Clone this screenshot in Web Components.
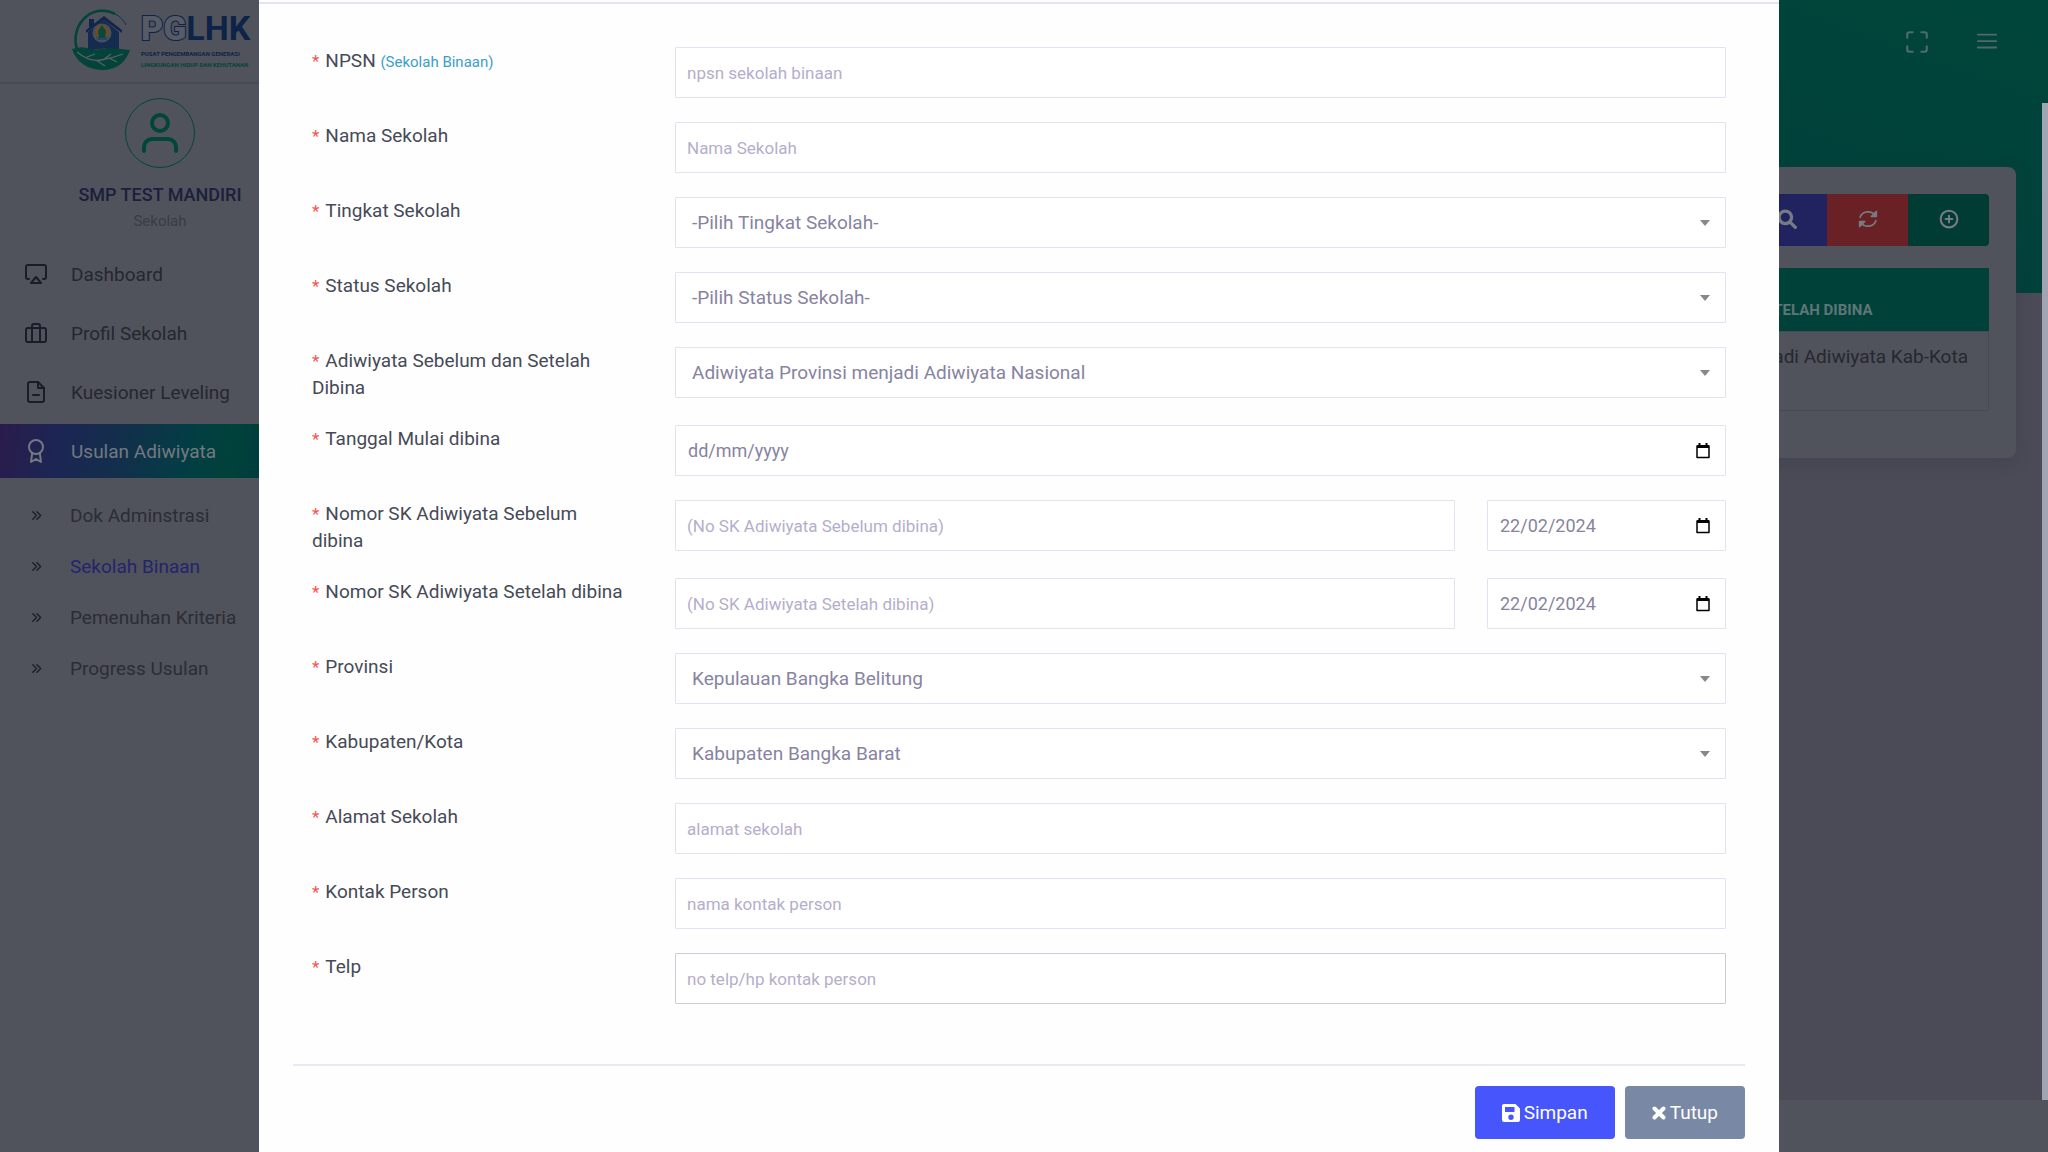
<!DOCTYPE html>
<html lang="id">
<head>
<meta charset="utf-8">
<title>Sekolah Binaan</title>
<style>
  body { margin: 0; background: #4b4b57; font-family: Roboto, "Noto Sans", sans-serif; font-size: 19px; line-height: 27px; color: #464a57; }
</style>
</head>
<body>
<app-shell>
  <side-bar slot="sidebar">
    <brand-logo slot="brand"></brand-logo>
    <user-card slot="user" name="SMP TEST MANDIRI" role-name="Sekolah"></user-card>
    <nav-item icon="airplay">Dashboard</nav-item>
    <nav-item icon="briefcase">Profil Sekolah</nav-item>
    <nav-item icon="file">Kuesioner Leveling</nav-item>
    <nav-item icon="award" active>Usulan Adiwiyata</nav-item>
    <sub-item slot="sub">Dok Adminstrasi</sub-item>
    <sub-item slot="sub" active>Sekolah Binaan</sub-item>
    <sub-item slot="sub">Pemenuhan Kriteria</sub-item>
    <sub-item slot="sub">Progress Usulan</sub-item>
  </side-bar>
  <top-bar slot="top"></top-bar>
  <data-card></data-card>
</app-shell>
<form-modal>
  <form-field label="NPSN" note="(Sekolah Binaan)" placeholder="npsn sekolah binaan"></form-field>
  <form-field label="Nama Sekolah" placeholder="Nama Sekolah"></form-field>
  <form-field kind="select" label="Tingkat Sekolah" value="-Pilih Tingkat Sekolah-"></form-field>
  <form-field kind="select" label="Status Sekolah" value="-Pilih Status Sekolah-"></form-field>
  <form-field kind="select" label="Adiwiyata Sebelum dan Setelah|Dibina" value="Adiwiyata Provinsi menjadi Adiwiyata Nasional"></form-field>
  <form-field kind="date" label="Tanggal Mulai dibina" placeholder="dd/mm/yyyy"></form-field>
  <form-field kind="pair" label="Nomor SK Adiwiyata Sebelum|dibina" placeholder="(No SK Adiwiyata Sebelum dibina)" value="22/02/2024"></form-field>
  <form-field kind="pair" label="Nomor SK Adiwiyata Setelah dibina" placeholder="(No SK Adiwiyata Setelah dibina)" value="22/02/2024"></form-field>
  <form-field kind="select" label="Provinsi" value="Kepulauan Bangka Belitung"></form-field>
  <form-field kind="select" label="Kabupaten/Kota" value="Kabupaten Bangka Barat"></form-field>
  <form-field label="Alamat Sekolah" placeholder="alamat sekolah"></form-field>
  <form-field label="Kontak Person" placeholder="nama kontak person"></form-field>
  <form-field label="Telp" placeholder="no telp/hp kontak person" current></form-field>
  <action-button slot="actions" icon="save">Simpan</action-button>
  <action-button slot="actions" icon="close" tone="muted">Tutup</action-button>
</form-modal>

<script>
const line = (body, w = 2) => `<svg viewBox="0 0 24 24" fill="none" stroke="currentColor" stroke-width="${w}" stroke-linecap="round" stroke-linejoin="round" aria-hidden="true">${body}</svg>`;
const ICONS = {
  airplay: line('<path d="M5 17H4a2 2 0 0 1-2-2V5a2 2 0 0 1 2-2h16a2 2 0 0 1 2 2v10a2 2 0 0 1-2 2h-1"/><path d="M12 15l5 6H7z"/>'),
  briefcase: line('<rect x="2" y="7" width="20" height="14" rx="2"/><path d="M16 21V5a2 2 0 0 0-2-2h-4a2 2 0 0 0-2 2v16"/>'),
  file: line('<path d="M14 2H6a2 2 0 0 0-2 2v16a2 2 0 0 0 2 2h12a2 2 0 0 0 2-2V8z"/><path d="M14 2v6h6M9 15h6"/>'),
  award: line('<circle cx="12" cy="8" r="7"/><path d="M8.2 13.9L7 23l5-3 5 3-1.200-9.100"/>'),
  user: line('<path d="M20 21v-2a4 4 0 0 0-4-4H8a4 4 0 0 0-4 4v2"/><circle cx="12" cy="7" r="4"/>'),
  maximize: line('<path d="M8 3H5a2 2 0 0 0-2 2v3M21 8V5a2 2 0 0 0-2-2h-3M16 21h3a2 2 0 0 0 2-2v-3M3 16v3a2 2 0 0 0 2 2h3"/>'),
  menu: line('<path d="M2 4h20M2 11h20M2 18h20"/>'),
  search: line('<circle cx="10" cy="10" r="7.500"/><path d="M16 16l6 6"/>', 4),
  refresh: line('<path d="M2.500 10a10 9 0 0 1 18-2.500M21.500 14a10 9 0 0 1-18 2.500"/><path d="M22 3v6h-6zM2 21v-6h6z" fill="currentColor"/>'),
  plus: line('<circle cx="12" cy="12" r="10"/><path d="M12 8v8M8 12h8"/>', 2.5),
  chevrons: line('<path d="M4 4l8 8-8 8M13 4l8 8-8 8"/>', 3),
  calendar: '<svg viewBox="0 0 14 16" fill="none" aria-hidden="true"><path d="M1 3h12v11.500H1z" stroke="#000" stroke-width="1.500" stroke-linejoin="round"/><path d="M1 2h12v3H1zM2.500 0h2v3h-2zM9.500 0h2v3h-2z" fill="#000"/></svg>',
  save: '<svg viewBox="0 0 18 18" fill="#fff" fill-rule="evenodd" aria-hidden="true"><path d="M2 0h11.500L18 4.500V16a2 2 0 0 1-2 2H2a2 2 0 0 1-2-2V2a2 2 0 0 1 2-2zM3 3v5h9.500V3zM9 10.500a2.700 2.700 0 1 0 0 5.400 2.700 2.700 0 0 0 0-5.400z"/></svg>',
  close: '<svg viewBox="0 0 14 14" fill="none" stroke="#fff" stroke-width="4" stroke-linecap="round" aria-hidden="true"><path d="M2.500 2.500l9 9M11.500 2.500l-9 9"/></svg>'
};

class BaseElement extends HTMLElement {
  connectedCallback() {
    if (this.shadowRoot) return;
    this.attachShadow({ mode: 'open' }).innerHTML =
      `<style>*{box-sizing:border-box} svg{display:block} ${this.css()}</style>${this.html()}`;
  }
}

customElements.define('app-shell', class extends BaseElement {
  css() { return `
    :host { display: grid; grid-template-columns: 320px minmax(0, 1fr); min-height: 100vh; }
    .main { display: flex; flex-direction: column; background: linear-gradient(200deg, #00453a, #003f3b 50%, #004038) top / 100% 293px no-repeat #4b4b57; }
    .content { flex: 1; padding: 83px 32px 24px; }
    footer { height: 52px; background: #50535b; }
    .thumb { position: fixed; right: 0; top: 103px; bottom: 52px; width: 6px; background: #a1a5b3; }`; }
  html() { return `<slot name="sidebar"></slot><div class="main"><slot name="top"></slot><main class="content"><slot></slot></main><footer></footer></div><div class="thumb"></div>`; }
});

customElements.define('side-bar', class extends BaseElement {
  css() { return `
    :host { display: block; background: #50535b; }
    .brand { height: 84px; border-bottom: 2px solid #474a55; padding: 8px 0 0 71px; }
    nav { display: flex; flex-direction: column; gap: 5px; margin-top: 12px; }
    .sub { display: flex; flex-direction: column; margin-top: 12px; }`; }
  html() { return `<div class="brand"><slot name="brand"></slot></div><slot name="user"></slot><nav><slot></slot></nav><div class="sub"><slot name="sub"></slot></div>`; }
});

customElements.define('brand-logo', class extends BaseElement {
  css() { return `
    :host { display: flex; gap: 10px; align-items: flex-start; }
    .mark { width: 60px; height: 63px; flex: none; }
    .words { white-space: nowrap; font-weight: 700; color: #0e2348; }
    .name { font-size: 34px; line-height: 40px; }
    .name b { color: #565b66; -webkit-text-stroke: 2px #0e2348; paint-order: stroke fill; }
    .line { font-size: 6px; line-height: 11px; }
    .green { color: #04433a; }`; }
  html() { return `
    <svg class="mark" viewBox="0 0 60 63" aria-hidden="true">
      <path d="M8 46A27 29 0 0 1 44 6" fill="none" stroke="#04433a" stroke-width="2.500"/>
      <path d="M44 6q8 4 11 11" fill="none" stroke="#14344a" stroke-width="1"/>
      <path d="M15 22L33 8l18 14v3L33 12 15 25z" fill="#10264c"/>
      <path d="M18 11h5v5l-5 4z" fill="#10264c"/>
      <path d="M17 24L33 12l15 12v19q-14-5-31 0z" fill="#142c50"/>
      <circle cx="31" cy="25" r="9.500" fill="#4a4f5b"/>
      <circle cx="31" cy="24" r="7" fill="#6b4f22"/>
      <path d="M31 17l4 6-1 7h-6l-1-7z" fill="#0a473c"/>
      <path d="M25 28q6 5 12 0l-2 4h-8z" fill="#20466e"/>
      <path d="M1 41q12-4 20 1 20-3 38 0-7 20-28 20Q8 61 1 41z" fill="#04433a"/>
      <path d="M6 44q12 10 24 8t22-6M16 49l8-3M25 52l9 6M32 52l8-6M38 50l8 4" fill="none" stroke="#5a6067" stroke-width="1.300"/>
    </svg>
    <div class="words"><div class="name"><b>PG</b>LHK</div><div class="line">PUSAT PENGEMBANGAN GENERASI</div><div class="line green">LINGKUNGAN HIDUP DAN KEHUTANAN</div></div>`; }
});

customElements.define('user-card', class extends BaseElement {
  css() { return `
    :host { display: flex; flex-direction: column; align-items: center; padding-top: 14px; }
    .avatar { width: 70px; height: 70px; border: 1px solid #00463a; border-radius: 50%; color: #00463a; display: grid; place-items: center; }
    .avatar svg { width: 48px; height: 48px; }
    .name { font-size: 18px; font-weight: 500; color: #1c1f3b; margin-top: 13px; }
    .role { font-size: 15px; color: #393c44; }`; }
  html() { return `<div class="avatar">${ICONS.user}</div><div class="name">${this.getAttribute('name')}</div><div class="role">${this.getAttribute('role-name')}</div>`; }
});

customElements.define('nav-item', class extends BaseElement {
  css() { return `
    :host { display: block; }
    a { display: flex; align-items: center; gap: 23px; height: 54px; padding-left: 24px; color: #25272f; text-decoration: none; }
    a svg { width: 24px; height: 24px; color: #1a1c2a; }
    :host([active]) a { color: #747981; background: linear-gradient(100deg, #2a1c4b, #1c2554 18%, #122f4b 38%, #033d44 58%, #00423a 72%, #003a3e 84%); }
    :host([active]) svg { color: #747981; }`; }
  html() { return `<a href="#">${ICONS[this.getAttribute('icon')]}<span><slot></slot></span></a>`; }
});

customElements.define('sub-item', class extends BaseElement {
  css() { return `
    :host { display: block; }
    a { display: flex; align-items: center; gap: 28px; height: 51px; padding-left: 31px; color: #2b2d35; text-decoration: none; }
    a svg { width: 11px; height: 11px; color: #1c1e26; }
    :host([active]) span { color: #24246c; }`; }
  html() { return `<a href="#">${ICONS.chevrons}<span><slot></slot></span></a>`; }
});

customElements.define('top-bar', class extends BaseElement {
  css() { return `
    :host { display: flex; justify-content: flex-end; align-items: center; gap: 46px; height: 84px; padding-right: 50px; }
    button { border: 0; background: none; padding: 0; color: #506a6b; }
    svg { width: 26px; height: 26px; }
    .menu svg { width: 22px; height: 22px; }`; }
  html() { return `<button aria-label="Layar penuh">${ICONS.maximize}</button><button class="menu" aria-label="Menu">${ICONS.menu}</button>`; }
});

customElements.define('data-card', class extends BaseElement {
  css() { return `
    :host { display: block; background: #50535b; border-radius: 8px; padding: 27px 27px 47px; box-shadow: 0 4px 16px rgba(50, 50, 70, .3); }
    .tools { display: flex; justify-content: flex-end; }
    button { width: 81px; height: 52px; border: 0; padding: 0 0 3px; display: grid; place-items: center; color: #777b84; background: #20235f; }
    button:nth-child(2) { background: #692126; }
    button:nth-child(3) { background: #003b34; border-radius: 0 4px 4px 0; }
    svg { width: 20px; height: 20px; }
    table { width: 100%; border-collapse: collapse; margin-top: 22px; text-align: right; }
    th { height: 63px; background: #004239; color: #5f7577; font-size: 15px; font-weight: 700; vertical-align: bottom; padding: 0 116px 7px 0; }
    td { height: 79px; border: 1px solid #474a54; vertical-align: top; padding: 11px 20px; color: #25282f; }`; }
  html() { return `<div class="tools"><button aria-label="Cari">${ICONS.search}</button><button aria-label="Muat ulang">${ICONS.refresh}</button><button aria-label="Tambah">${ICONS.plus}</button></div>
    <table><thead><tr><th>SETELAH DIBINA</th></tr></thead><tbody><tr><td>menjadi Adiwiyata Kab-Kota</td></tr></tbody></table>`; }
});

customElements.define('form-modal', class extends BaseElement {
  css() { return `
    :host { position: fixed; inset: 0 10px 0 0; display: flex; justify-content: center; overflow: hidden; }
    form { width: 100%; max-width: 1520px; background: #fefefe; padding: 2px 34px 0; }
    .edge { height: 2px; background: #e4e3f6; margin: 0 -34px; }
    .fields { display: flex; flex-direction: column; gap: 24px; padding: 43px 19px 60px; border-bottom: 2px solid #e7e9f5; }
    .actions { display: flex; justify-content: flex-end; gap: 10px; padding-top: 20px; }`; }
  html() { return `<form role="dialog" aria-label="Sekolah Binaan"><div class="edge"></div><div class="fields"><slot></slot></div><div class="actions"><slot name="actions"></slot></div></form>`; }
});

customElements.define('form-field', class extends BaseElement {
  css() { return `
    :host { display: grid; grid-template-columns: 318px minmax(0, 1fr); column-gap: 45px; align-items: start; }
    .star { color: #f5544f; margin-right: 6px; font-size: 17px; line-height: 1; }
    .note { color: #3a9fc8; font-size: 15px; line-height: 1; }
    input, select { font: inherit; width: 100%; height: 51px; border: 1px solid #e2e2f3; border-radius: 1px; background: #fff; outline: 0; margin: 0; color: #8783a0; appearance: none; display: block; }
    input { font-size: 17px; padding: 0 11px; }
    input::placeholder { color: #b5aecb; opacity: 1; }
    select { padding: 0 16px; }
    :host([current]) input { border-color: #cccbdc; }
    .group { display: grid; grid-template-columns: minmax(0, 1fr) 239px; gap: 32px; }
    .wrap { display: grid; align-items: center; }
    .wrap > * { grid-area: 1 / 1; }
    .arrow { justify-self: end; margin-right: 16px; border: 5px solid transparent; border-top: 6px solid #888; border-bottom: 0; pointer-events: none; }
    .date input { font-size: 18px; padding: 0 12px; }
    .date input::placeholder { color: #8783a0; }
    .date button { justify-self: end; margin-right: 16px; padding: 0; border: 0; background: none; }
    .date svg { width: 14px; height: 16px; }`; }
  date(id, extra) { return `<div class="wrap date"><input type="text" ${extra} id="${id}"><button type="button" aria-label="Pilih tanggal">${ICONS.calendar}</button></div>`; }
  control() {
    const ph = `placeholder="${this.getAttribute('placeholder') || ''}"`, value = this.getAttribute('value');
    switch (this.getAttribute('kind')) {
      case 'select': return `<div class="wrap"><select id="field"><option>${value}</option></select><span class="arrow"></span></div>`;
      case 'date': return this.date('field', ph);
      case 'pair': return `<div class="group"><input type="text" id="field" ${ph}>${this.date('when', `value="${value}" aria-label="Tanggal SK"`)}</div>`;
      default: return `<input type="text" id="field" ${ph}>`;
    }
  }
  html() {
    const note = this.getAttribute('note');
    const label = this.getAttribute('label').split('|').map(part => `<span>${part}</span>`).join(' ');
    return `<label for="field"><span class="star">*</span>${label}${note ? ` <span class="note">${note}</span>` : ''}</label>${this.control()}`;
  }
});

customElements.define('action-button', class extends BaseElement {
  css() { return `
    :host { display: block; }
    button { font: inherit; color: #fff; background: #4656fc; border: 0; border-radius: 4px; height: 53px; padding: 0 27px; display: flex; align-items: center; gap: 4px; }
    :host([tone]) button { background: #7988a4; }
    svg { width: 18px; height: 18px; }
    :host([tone]) svg { width: 14px; height: 14px; }`; }
  html() { return `<button type="button">${ICONS[this.getAttribute('icon')]}<slot></slot></button>`; }
});
</script>
</body>
</html>
